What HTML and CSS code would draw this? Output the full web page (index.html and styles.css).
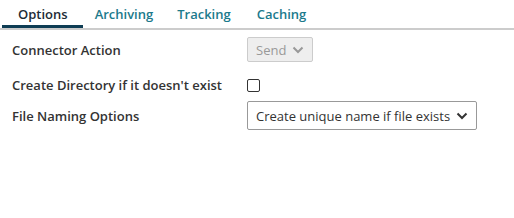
FILE: index.html
```html
<!DOCTYPE html>
<html lang="en">
<head>
    <meta charset="UTF-8">
    <title>Connector Options</title>
    <link rel="stylesheet" href="styles.css">
</head>
<body>
    <div class="tabs">
        <div class="tab active">Options</div>
        <div class="tab">Archiving</div>
        <div class="tab">Tracking</div>
        <div class="tab">Caching</div>
    </div>

    <div class="form">
        <div class="row row-action">
            <label class="label">Connector Action</label>
            <div class="select disabled">Send <span class="chev"><svg width="12" height="8" viewBox="0 0 12 8"><path d="M1.5 1.5 L6 6 L10.5 1.5" fill="none" stroke="currentColor" stroke-width="2"/></svg></span></div>
        </div>
        <div class="row row-check">
            <label class="label">Create Directory if it doesn't exist</label>
            <span class="checkbox"></span>
        </div>
        <div class="row row-naming">
            <label class="label">File Naming Options</label>
            <div class="select">Create unique name if file exists <span class="chev"><svg width="12" height="8" viewBox="0 0 12 8"><path d="M1.5 1.5 L6 6 L10.5 1.5" fill="none" stroke="currentColor" stroke-width="2"/></svg></span></div>
        </div>
    </div>
</body>
</html>
```

FILE: styles.css
```css
body {
    margin: 0;
    font-family: "Open Sans", sans-serif;
    font-size: 13px;
    color: #333;
    background: #fff;
}
.tabs {
    display: flex;
    border-bottom: 2px solid #ccc;
    height: 30px;
    box-sizing: border-box;
    padding-left: 2px;
}
.tab {
    color: #1b7a8c;
    font-weight: 600;
    padding: 5px 12px 0 12px;
    height: 28px;
    box-sizing: border-box;
}
.tab:nth-child(4) {
    padding-left: 14px;
}
.tab.active {
    color: #1d2b36;
    padding: 5px 15px 0 16px;
    border-bottom: 3px solid #0e3d54;
}
.form {
    padding: 7px 0 0 12px;
}
.row {
    display: grid;
    grid-template-columns: 235px auto;
    align-items: center;
}
.row-action {
    height: 25px;
}
.row-check {
    margin-top: 14px;
    height: 14px;
}
.row-naming {
    margin-top: 11px;
    height: 29px;
}
.label {
    font-weight: 600;
    color: #333;
}
.select {
    display: flex;
    align-items: center;
    justify-self: start;
    box-sizing: border-box;
    height: 29px;
    width: 230px;
    padding: 0 8px;
    border: 1px solid #999;
    border-radius: 2px;
    color: #333;
    justify-content: space-between;
}
.select.disabled {
    width: 66px;
    height: 25px;
    background: #eee;
    border-color: #ccc;
    color: #999;
}
.chev {
    display: flex;
    margin-left: 4px;
}
.checkbox {
    width: 13px;
    height: 13px;
    box-sizing: border-box;
    border: 1px solid #333;
    border-radius: 2px;
}
```
